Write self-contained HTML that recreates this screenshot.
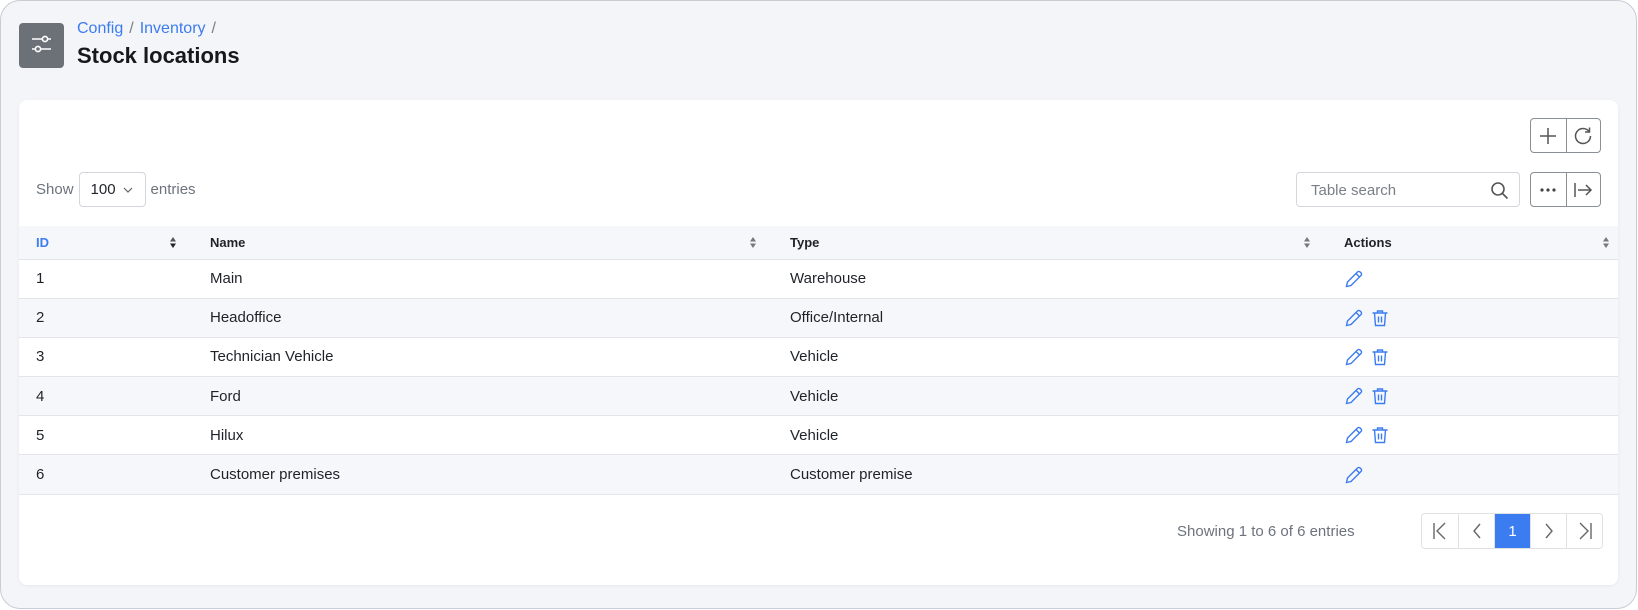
<!DOCTYPE html>
<html><head><style>
*{box-sizing:border-box;margin:0;padding:0}
body{width:1638px;height:610px;background:#fff;font-family:"Liberation Sans",sans-serif;color:#1f2329;overflow:hidden}
.outer{position:absolute;left:0;top:0;width:1637px;height:609px;background:#f4f5f9;border:1px solid #c9ccd2;border-radius:20px}
.ico{position:absolute;left:19px;top:23px;width:45px;height:45px;background:#6c7178;border-radius:4px}
.bc{position:absolute;left:77px;top:20px;font-size:16px;color:#3b7cf0}
.bc span{color:#7a7f87;margin:0 6px}
.title{position:absolute;left:77px;top:43px;font-size:22px;font-weight:bold;color:#15181c}
.card{position:absolute;left:19px;top:100px;width:1599px;height:485px;background:#fff;border-radius:8px;box-shadow:0 1px 3px rgba(0,0,0,.06)}
.bg{position:absolute;display:flex;border:1px solid #8a8f96;border-radius:4px;height:35px}
.bg div{width:35px;display:flex;align-items:center;justify-content:center}
.bg div+div{border-left:1px solid #8a8f96}
.show{position:absolute;left:17px;top:72px;font-size:15px;color:#6c737d;display:flex;align-items:center}
.sel{width:67px;height:35px;border:1px solid #d3d6db;border-radius:4px;margin:0 5px;display:flex;align-items:center;justify-content:center;color:#1f2329;font-size:15px}
.search{position:absolute;left:1277px;top:72px;width:224px;height:35px;border:1px solid #d3d6db;border-radius:4px;font-size:15px;color:#7a7f87;padding:9px 14px}
table{position:absolute;left:0;top:126px;width:1599px;border-collapse:collapse;font-size:15px}
th{height:33px;background:#f6f7fb;text-align:left;font-size:13px;font-weight:bold;padding:0;border-bottom:1px solid #e3e5e9;position:relative}
td{height:39.2px;padding:0;border-bottom:1px solid #e3e5e9}
tr:nth-child(odd) td{background:#f6f7fb}
.s{position:absolute;right:9px;top:11px;width:6px;height:11px}
.pag{position:absolute;left:1402px;top:413px;display:flex;border:1px solid #dfe1e5;border-radius:4px;height:36px;overflow:hidden}
.pag div{width:36px;display:flex;align-items:center;justify-content:center;border-left:1px solid #dfe1e5}
.pag div:first-child{border-left:none}
.info{position:absolute;left:1158px;top:423px;font-size:15px;color:#6c737d}
</style></head><body>
<div class="outer"></div>
<div class="ico"><svg width="45" height="45" viewBox="0 0 45 45" fill="none" stroke="#fff" stroke-width="1.6"><line x1="13" y1="16" x2="32" y2="16"/><line x1="13" y1="26" x2="32" y2="26"/><circle cx="26" cy="16" r="2.6" fill="#6c7178"/><circle cx="19" cy="26" r="2.6" fill="#6c7178"/></svg></div>
<div class="bc">Config<span>/</span>Inventory<span>/</span></div>
<div class="title">Stock locations</div>
<div class="card">
<div class="bg" style="left:1511px;top:18px;width:71px"><div><svg width="18" height="18" stroke="#555" stroke-width="1.5"><path d="M9 1v16M1 9h16"/></svg></div><div><svg width="20" height="20" fill="none" stroke="#555" stroke-width="1.5"><path d="M16 5.5A7.5 7.5 0 1 0 17.5 10"/><path d="M16.5 1.5v4.5h-4.5"/></svg></div></div>
<div class="show">Show<div class="sel">100 <svg width="12" height="8" style="margin-left:6px" fill="none" stroke="#666" stroke-width="1.2"><path d="M2 2l4 4 4-4"/></svg></div>entries</div>
<div class="search">Table search<svg style="position:absolute;right:10px;top:8px" width="19" height="19" fill="none" stroke="#555" stroke-width="1.6"><circle cx="8" cy="8" r="6"/><path d="M12.5 12.5l5 5"/></svg></div>
<div class="bg" style="left:1511px;top:72px;width:71px"><div><svg width="16" height="4" fill="#444"><circle cx="2" cy="2" r="1.6"/><circle cx="8" cy="2" r="1.6"/><circle cx="14" cy="2" r="1.6"/></svg></div><div><svg width="20" height="16" fill="none" stroke="#555" stroke-width="1.5"><path d="M2 1v14M5 8h13M13 3l5 5-5 5"/></svg></div></div>
<table>
<tr><th style="width:166px;padding-left:17px;color:#3b7cf0">ID<svg class="s" viewBox="0 0 6 11"><path d="M0 4.5L3 0 6 4.5z" fill="#555"/><path d="M0 6.5L3 11 6 6.5z" fill="#222"/></svg></th>
<th style="width:580px;padding-left:25px">Name<svg class="s" viewBox="0 0 6 11" fill="#777"><path d="M0 4.5L3 0 6 4.5zM0 6.5L3 11 6 6.5z"/></svg></th>
<th style="width:554px;padding-left:25px">Type<svg class="s" viewBox="0 0 6 11" fill="#777"><path d="M0 4.5L3 0 6 4.5zM0 6.5L3 11 6 6.5z"/></svg></th>
<th style="padding-left:25px">Actions<svg class="s" viewBox="0 0 6 11" fill="#777"><path d="M0 4.5L3 0 6 4.5zM0 6.5L3 11 6 6.5z"/></svg></th></tr>
<tr><td style="padding-left:17px">1</td><td style="padding-left:25px">Main</td><td style="padding-left:25px">Warehouse</td><td style="padding-left:25px" class="a">P</td></tr>
<tr><td style="padding-left:17px">2</td><td style="padding-left:25px">Headoffice</td><td style="padding-left:25px">Office/Internal</td><td style="padding-left:25px" class="a">PD</td></tr>
<tr><td style="padding-left:17px">3</td><td style="padding-left:25px">Technician Vehicle</td><td style="padding-left:25px">Vehicle</td><td style="padding-left:25px" class="a">PD</td></tr>
<tr><td style="padding-left:17px">4</td><td style="padding-left:25px">Ford</td><td style="padding-left:25px">Vehicle</td><td style="padding-left:25px" class="a">PD</td></tr>
<tr><td style="padding-left:17px">5</td><td style="padding-left:25px">Hilux</td><td style="padding-left:25px">Vehicle</td><td style="padding-left:25px" class="a">PD</td></tr>
<tr><td style="padding-left:17px">6</td><td style="padding-left:25px">Customer premises</td><td style="padding-left:25px">Customer premise</td><td style="padding-left:25px" class="a">P</td></tr>
</table>
<div class="info">Showing 1 to 6 of 6 entries</div>
<div class="pag">
<div><svg width="16" height="18" fill="none" stroke="#666" stroke-width="1.4"><path d="M2 1v16M13 1L5 9l8 8"/></svg></div>
<div><svg width="12" height="18" fill="none" stroke="#666" stroke-width="1.4"><path d="M9 2L3 9l6 7"/></svg></div>
<div style="background:#3b7cf0;color:#fff;font-size:15px">1</div>
<div><svg width="12" height="18" fill="none" stroke="#666" stroke-width="1.4"><path d="M3 2l6 7-6 7"/></svg></div>
<div><svg width="16" height="18" fill="none" stroke="#666" stroke-width="1.4"><path d="M14 1v16M3 1l8 8-8 8"/></svg></div>
</div>
</div>
<script>
var P='<svg width="20" height="20" viewBox="0 0 20 20" fill="none" stroke="#3b7cf0" stroke-width="1.4" style="vertical-align:middle"><path d="M2.5 17.5l1-4.5L13.5 3a1.8 1.8 0 0 1 2.6 0l.9.9a1.8 1.8 0 0 1 0 2.6L7 16.5z"/><path d="M12 4.5l3.5 3.5"/></svg>';
var D='<svg width="20" height="20" viewBox="0 0 20 20" fill="none" stroke="#3b7cf0" stroke-width="1.4" style="vertical-align:middle;margin-left:6px"><path d="M2.5 5h15M7.5 5V3h5v2M4.5 5l1 12.5h9L15.5 5M8.5 8.5v6M11.5 8.5v6"/></svg>';
document.querySelectorAll('.a').forEach(function(e){var t=e.textContent;e.innerHTML=P+(t.length>1?D:'');});
</script>
</body></html>
